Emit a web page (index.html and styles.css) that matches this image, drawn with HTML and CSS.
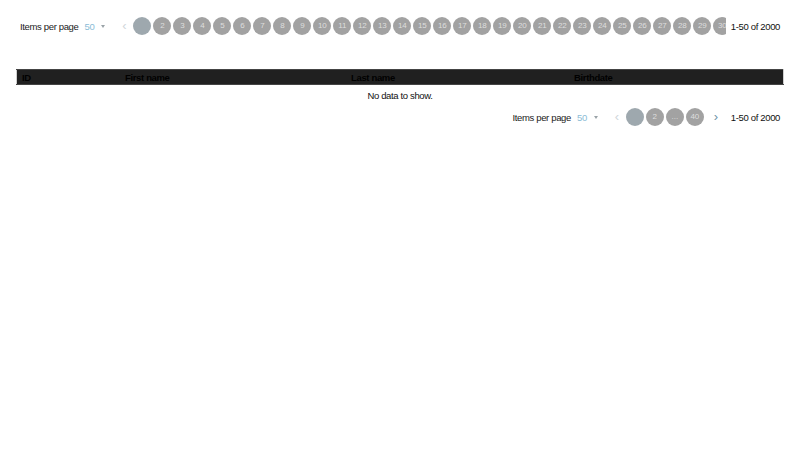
FILE: index.html
```html
<!DOCTYPE html>
<html>
<head>
<meta charset="utf-8">
<link rel="stylesheet" href="styles.css">
</head>
<body>
<div class="page">
  <div class="pager pager-top">
    <span class="ipp-label">Items per page</span>
    <span class="ipp-value">50</span>
    <span class="caret"></span>
    <span class="arrow arrow-off">&#8249;</span>
    <div class="pages">
      <span class="pg active">1</span><span class="pg">2</span><span class="pg">3</span><span class="pg">4</span><span class="pg">5</span><span class="pg">6</span><span class="pg">7</span><span class="pg">8</span><span class="pg">9</span><span class="pg">10</span><span class="pg">11</span><span class="pg">12</span><span class="pg">13</span><span class="pg">14</span><span class="pg">15</span><span class="pg">16</span><span class="pg">17</span><span class="pg">18</span><span class="pg">19</span><span class="pg">20</span><span class="pg">21</span><span class="pg">22</span><span class="pg">23</span><span class="pg">24</span><span class="pg">25</span><span class="pg">26</span><span class="pg">27</span><span class="pg">28</span><span class="pg">29</span><span class="pg">30</span>
    </div>
    <span class="range">1-50 of 2000</span>
  </div>

  <table class="grid">
    <thead>
      <tr>
        <th class="c-id">ID</th>
        <th class="c-first">First name</th>
        <th class="c-last">Last name</th>
        <th class="c-birth">Birthdate</th>
      </tr>
    </thead>
    <tbody>
      <tr><td colspan="4" class="empty">No data to show.</td></tr>
    </tbody>
  </table>

  <div class="pager pager-bottom">
    <span class="ipp-label">Items per page</span>
    <span class="ipp-value">50</span>
    <span class="caret"></span>
    <span class="arrow arrow-off">&#8249;</span>
    <div class="pages-short">
      <span class="pg active">1</span><span class="pg">2</span><span class="pg">...</span><span class="pg">40</span>
    </div>
    <span class="arrow arrow-on">&#8250;</span>
    <span class="range">1-50 of 2000</span>
  </div>
</div>
</body>
</html>
```

FILE: styles.css
```css
html, body {
  margin: 0;
  padding: 0;
  background: #ffffff;
}

body {
  font-family: "Liberation Sans", Arial, sans-serif;
  font-size: 9.5px;
  letter-spacing: -0.35px;
  color: #222222;
}

.page {
  padding: 0 16px;
}

.pager {
  display: flex;
  align-items: center;
  padding: 0 4px;
  height: 22px;
}

.pager-top {
  margin-top: 15px;
}

.pager-bottom {
  justify-content: flex-end;
}

.ipp-label {
  color: #222222;
  white-space: nowrap;
}

.ipp-value {
  color: #8bbcd6;
  margin-left: 6px;
}

.caret {
  width: 0;
  height: 0;
  border-left: 2.5px solid transparent;
  border-right: 2.5px solid transparent;
  border-top: 3px solid #9aa3a8;
  margin-left: 7px;
  margin-top: 1px;
}

.arrow {
  font-size: 13px;
  letter-spacing: 0;
  width: 10px;
  text-align: center;
  line-height: 18px;
}

.arrow-off {
  color: #cfd6da;
  margin-left: 14px;
  margin-right: 3px;
}

.arrow-on {
  color: #6f96a8;
  margin-left: 6px;
  margin-right: 10px;
}

.pages {
  flex: 1;
  display: flex;
  overflow: hidden;
  min-width: 0;
  margin-right: 5px;
}

.pages-short {
  display: flex;
}

.pg {
  flex: 0 0 auto;
  width: 18px;
  height: 18px;
  border-radius: 50%;
  background: #a2a2a2;
  color: #dedede;
  font-size: 8px;
  letter-spacing: 0;
  line-height: 18px;
  text-align: center;
  margin: 0 1px;
}

.pg.active {
  background: #9ea8ae;
  color: #9ea8ae;
}

.range {
  white-space: nowrap;
  color: #111111;
}

.grid {
  width: 100%;
  border-collapse: collapse;
  margin-top: 32px;
}

.grid th {
  background: #202020;
  color: #000000;
  font-weight: bold;
  text-align: left;
  height: 14px;
  padding: 0 5px;
  font-size: 9.5px;
  border-top: 1px solid #444;
  border-bottom: 1px solid #444;
}

.grid th.c-id { width: 93px; border-left: 1px solid #cfcfcf; }
.grid th.c-first { width: 216px; }
.grid th.c-last { width: 213px; }
.grid th.c-birth { border-right: 1px solid #cfcfcf; }

.empty {
  text-align: center;
  padding: 0;
  height: 21px;
  color: #111111;
}
```
